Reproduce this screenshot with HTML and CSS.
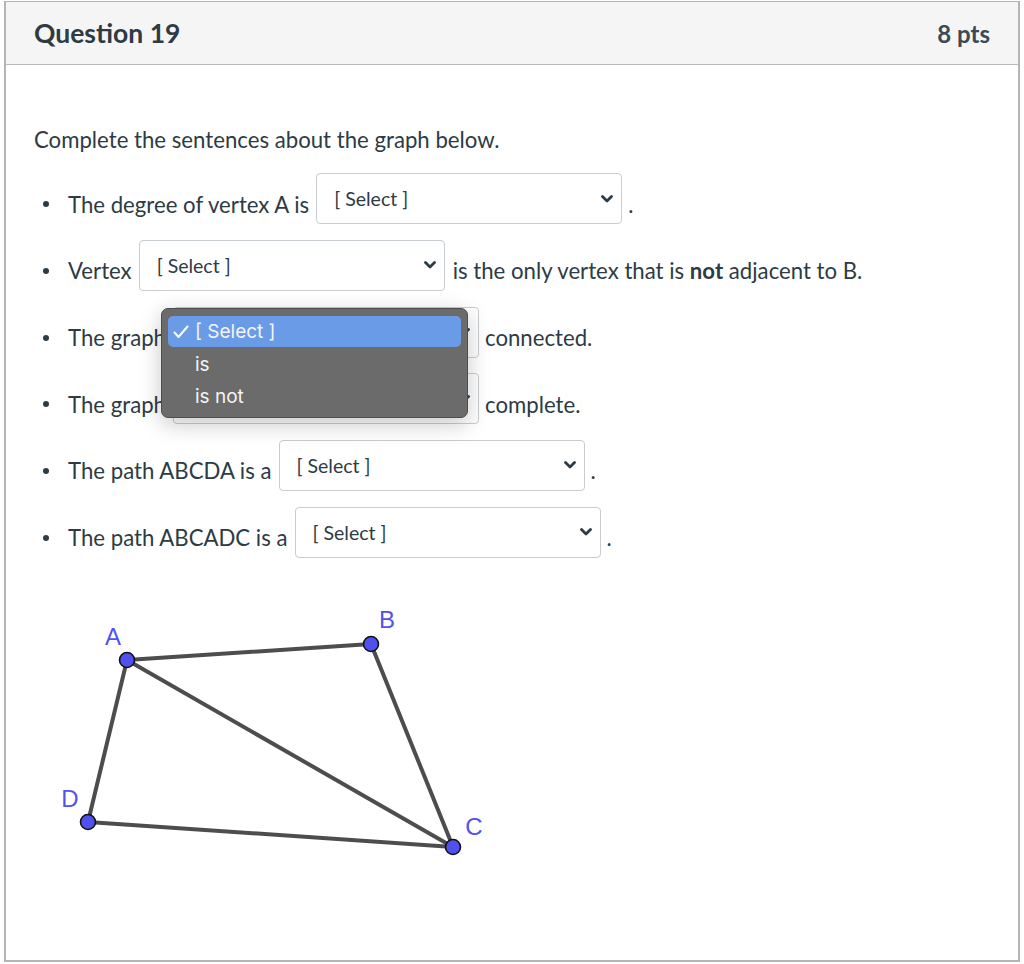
FILE: index.html
```html
<!DOCTYPE html>
<html>
<head>
<meta charset="utf-8">
<link rel="stylesheet" href="styles.css">
</head>
<body>
<div class="question">
  <div class="header">
    <span class="title">Question 19</span>
    <span class="pts">8 pts</span>
  </div>
  <div class="content">
    <p class="intro">Complete the sentences about the graph below.</p>
    <ul class="items">
      <li><span>The degree of vertex A is</span><div class="sel"><span>[ Select ]</span><svg class="chev" width="12" height="8" viewBox="0 0 12 8"><path d="M1.5 1.5 L6 6 L10.5 1.5" fill="none" stroke="#2d3b45" stroke-width="2.8" stroke-linecap="round" stroke-linejoin="round"/></svg></div><span>.</span></li>
      <li><span>Vertex</span><div class="sel"><span>[ Select ]</span><svg class="chev" width="12" height="8" viewBox="0 0 12 8"><path d="M1.5 1.5 L6 6 L10.5 1.5" fill="none" stroke="#2d3b45" stroke-width="2.8" stroke-linecap="round" stroke-linejoin="round"/></svg></div><span class="after">is the only vertex that is <b>not</b> adjacent to B.</span></li>
      <li><span>The graph</span><div class="sel open"><span>[ Select ]</span><svg class="chev" width="12" height="8" viewBox="0 0 12 8"><path d="M1.5 1.5 L6 6 L10.5 1.5" fill="none" stroke="#2d3b45" stroke-width="2.8" stroke-linecap="round" stroke-linejoin="round"/></svg>
        <div class="menu">
          <div class="opt active"><svg class="check" width="16" height="14" viewBox="0 0 16 14"><path d="M1.5 7.5 L5.5 12 L14.5 1.5" fill="none" stroke="#ffffff" stroke-width="2" stroke-linecap="round" stroke-linejoin="round"/></svg>[ Select ]</div>
          <div class="opt">is</div>
          <div class="opt">is not</div>
        </div>
      </div><span>connected.</span></li>
      <li><span>The graph</span><div class="sel"><span>[ Select ]</span><svg class="chev" width="12" height="8" viewBox="0 0 12 8"><path d="M1.5 1.5 L6 6 L10.5 1.5" fill="none" stroke="#2d3b45" stroke-width="2.8" stroke-linecap="round" stroke-linejoin="round"/></svg></div><span>complete.</span></li>
      <li><span>The path ABCDA is a</span><div class="sel"><span>[ Select ]</span><svg class="chev" width="12" height="8" viewBox="0 0 12 8"><path d="M1.5 1.5 L6 6 L10.5 1.5" fill="none" stroke="#2d3b45" stroke-width="2.8" stroke-linecap="round" stroke-linejoin="round"/></svg></div><span>.</span></li>
      <li><span>The path ABCADC is a</span><div class="sel"><span>[ Select ]</span><svg class="chev" width="12" height="8" viewBox="0 0 12 8"><path d="M1.5 1.5 L6 6 L10.5 1.5" fill="none" stroke="#2d3b45" stroke-width="2.8" stroke-linecap="round" stroke-linejoin="round"/></svg></div><span>.</span></li>
    </ul>
    <svg class="graph" width="460" height="280" viewBox="0 0 460 280">
      <g stroke="#4d4d4d" stroke-width="4" stroke-linecap="round">
        <line x1="77" y1="60" x2="321" y2="44"/>
        <line x1="321" y1="44" x2="403" y2="247"/>
        <line x1="77" y1="60" x2="403" y2="247"/>
        <line x1="77" y1="60" x2="38" y2="222"/>
        <line x1="38" y1="222" x2="403" y2="247"/>
      </g>
      <g fill="#5050ee" stroke="#111" stroke-width="1.6">
        <circle cx="77" cy="60" r="7.5"/>
        <circle cx="321" cy="44" r="7.5"/>
        <circle cx="403" cy="247" r="7.5"/>
        <circle cx="38" cy="222" r="7.5"/>
      </g>
      <g class="lbl" fill="#5252ee" text-anchor="middle">
        <text x="63" y="45">A</text>
        <text x="337" y="28">B</text>
        <text x="424" y="235">C</text>
        <text x="20" y="207">D</text>
      </g>
    </svg>
  </div>
</div>
</body>
</html>
```

FILE: styles.css
```css
html, body {
  margin: 0;
  padding: 0;
  background: #ffffff;
}
body {
  font-family: Lato, "Liberation Sans", sans-serif;
  color: #2d3b45;
}
.question {
  margin: 1px 4px 0 4px;
  height: 961px;
  box-sizing: border-box;
  border: 2px solid #b4b4b4;
  border-top-width: 1px;
  background: #fff;
}
.header {
  height: 63px;
  box-sizing: border-box;
  background: #f5f5f5;
  border-bottom: 1px solid #b9b9b9;
  display: flex;
  align-items: center;
  justify-content: space-between;
  padding: 0 28px 0 28px;
}
.title {
  font-size: 26.5px;
  font-weight: 700;
}
.pts {
  font-size: 24px;
  font-weight: 700;
  color: #3b4a55;
}
.content {
  padding: 60px 28px 0 28px;
}
.intro {
  margin: 0;
  font-size: 22.2px;
  line-height: 30px;
}
.items {
  list-style: none;
  margin: 16px 0 0 0;
  padding: 0;
}
.items li {
  height: 66.67px;
  display: flex;
  align-items: center;
  font-size: 22.2px;
  white-space: nowrap;
}
.items li::before {
  content: "";
  width: 6px;
  height: 6px;
  border-radius: 50%;
  background: #2d3b45;
  margin: 0 19px 0 9px;
  flex: none;
}
.after {
  margin-left: 2px;
}
.sel {
  position: relative;
  width: 306px;
  height: 51px;
  box-sizing: border-box;
  border: 1px solid #c7cdd1;
  border-radius: 4px;
  background: #fff;
  margin: 0 6px 11px 7px;
  padding: 0 8px 0 17px;
  display: flex;
  align-items: center;
  justify-content: space-between;
  font-size: 19.5px;
  flex: none;
}
.chev {
  display: block;
}
.menu {
  position: absolute;
  left: -13px;
  top: 0;
  width: 307px;
  height: 110px;
  box-sizing: border-box;
  background: #6b6b6b;
  border: 1px solid #4e4e4e;
  border-radius: 7px;
  box-shadow: 0 6px 22px rgba(0, 0, 0, 0.22);
  padding: 7px 6px;
  font-family: Inter, "Noto Sans", sans-serif;
  font-size: 19px;
  color: #f4f4f4;
  z-index: 5;
}
.opt {
  height: 32px;
  line-height: 32px;
  padding-left: 27px;
  border-radius: 5px;
  position: relative;
}
.opt.active {
  background: #6a9be6;
  height: 31px;
  line-height: 31px;
  margin-bottom: 2px;
}
.check {
  position: absolute;
  left: 5px;
  top: 9px;
  display: block;
}
.graph {
  display: block;
  margin: 29px 0 0 16px;
}
.lbl {
  font-family: "Liberation Sans", Arial, sans-serif;
  font-size: 24px;
}
```
